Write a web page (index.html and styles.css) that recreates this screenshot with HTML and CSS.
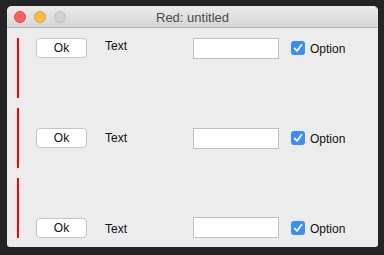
FILE: index.html
```html
<!DOCTYPE html>
<html>
<head>
<meta charset="utf-8">
<link rel="stylesheet" href="styles.css">
</head>
<body>
<div class="window">
  <div class="titlebar">
    <div class="lights">
      <span class="light red"></span>
      <span class="light yellow"></span>
      <span class="light gray"></span>
    </div>
    <div class="title">Red: untitled</div>
  </div>
  <div class="content">
    <div class="row top">
      <button class="btn">Ok</button>
      <span class="label">Text</span>
      <span class="field"></span>
      <span class="check"><svg width="14" height="14" viewBox="0 0 14 14"><rect x="0" y="0" width="14" height="14" rx="3" fill="#3b8ef3"/><path d="M3.6 7.4 L6 10 L10.6 3.8" fill="none" stroke="#fff" stroke-width="1.7" stroke-linecap="round" stroke-linejoin="round"/></svg><span>Option</span></span>
    </div>
    <div class="row middle">
      <button class="btn">Ok</button>
      <span class="label">Text</span>
      <span class="field"></span>
      <span class="check"><svg width="14" height="14" viewBox="0 0 14 14"><rect x="0" y="0" width="14" height="14" rx="3" fill="#3b8ef3"/><path d="M3.6 7.4 L6 10 L10.6 3.8" fill="none" stroke="#fff" stroke-width="1.7" stroke-linecap="round" stroke-linejoin="round"/></svg><span>Option</span></span>
    </div>
    <div class="row bottom">
      <button class="btn">Ok</button>
      <span class="label">Text</span>
      <span class="field"></span>
      <span class="check"><svg width="14" height="14" viewBox="0 0 14 14"><rect x="0" y="0" width="14" height="14" rx="3" fill="#3b8ef3"/><path d="M3.6 7.4 L6 10 L10.6 3.8" fill="none" stroke="#fff" stroke-width="1.7" stroke-linecap="round" stroke-linejoin="round"/></svg><span>Option</span></span>
    </div>
  </div>
</div>
</body>
</html>
```

FILE: styles.css
```css
html, body {
  margin: 0;
  padding: 0;
  background: #242424;
  width: 384px;
  height: 255px;
  overflow: hidden;
  font-family: "Liberation Sans", Arial, sans-serif;
}
.window {
  margin: 6px 0 0 7px;
  width: 371px;
  height: 241px;
  background: #ececec;
  border-radius: 5px 5px 3px 3px;
  overflow: hidden;
}
.titlebar {
  position: relative;
  height: 21px;
  background: linear-gradient(#ebebeb, #d6d6d6);
  border-bottom: 1px solid #b4b4b4;
  display: flex;
  align-items: center;
  justify-content: center;
}
.lights {
  position: absolute;
  left: 7px;
  top: 5px;
  display: flex;
  gap: 8px;
}
.light {
  width: 12px;
  height: 12px;
  border-radius: 50%;
  box-sizing: border-box;
}
.red { background: #fc605b; border: 1px solid #de4a45; }
.yellow { background: #fdbc40; border: 1px solid #dea236; }
.gray { background: #d3d3d3; border: 1px solid #bdbdbd; }
.title {
  font-size: 13px;
  color: #4a4a4a;
  padding-top: 1px;
}
.content {
  padding: 10px 10px 9px 10px;
  display: flex;
  flex-direction: column;
  gap: 10px;
}
.row {
  height: 60px;
  border-left: 2px solid #ff0000;
  padding-left: 17px;
  display: flex;
  font-size: 12px;
  color: #111;
}
.row.top { align-items: flex-start; }
.row.middle { align-items: center; }
.row.bottom { align-items: flex-end; }
.btn {
  width: 51px;
  height: 20px;
  box-sizing: border-box;
  border: 1px solid #c4c4c4;
  border-radius: 4px;
  background: #fff;
  font-family: inherit;
  font-size: 12px;
  color: #111;
  padding: 0;
  margin: 0 18px 0 0;
}
.label {
  width: 88px;
  line-height: 17px;
}
.field {
  width: 86px;
  height: 21px;
  box-sizing: border-box;
  border: 1px solid #c0c0c0;
  background: #fff;
  margin-right: 12px;
}
.check {
  height: 20px;
  display: flex;
  align-items: center;
  gap: 5px;
}
.check span { padding-top: 1px; }
.check svg { display: block; }
```
